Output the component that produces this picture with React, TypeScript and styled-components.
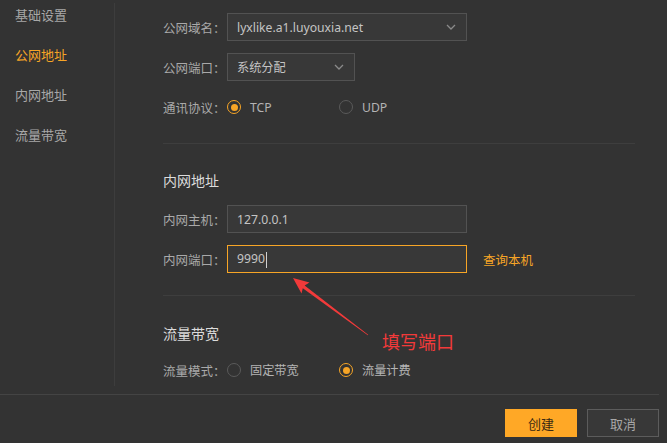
import React from 'react';
import styled, { createGlobalStyle } from 'styled-components';

const Global = createGlobalStyle`
  html, body { margin: 0; padding: 0; background: #333333; }
  body {
    font-family: "Noto Sans", "Noto Sans CJK SC", sans-serif;
    font-size: 13px;
    color: #aaaaaa;
  }
  * { box-sizing: border-box; }
`;

const Page = styled.div`
  position: relative;
  width: 667px;
  height: 443px;
  background: #333333;
  display: flex;
  flex-direction: column;
  overflow: hidden;
`;

const Body = styled.div`
  display: flex;
  height: 394px;
`;

const Sidebar = styled.nav`
  width: 115px;
  flex-shrink: 0;
  margin: 3px 0 8px;
  border-right: 1px solid #3d3d3d;
`;

const NavList = styled.ul`
  list-style: none;
  margin: -8px 0 0;
  padding: 0;
`;

const NavItem = styled.li<{ $active?: boolean }>`
  height: 40px;
  line-height: 40px;
  padding-left: 15px;
  font-size: 13px;
  font-family: "Noto Sans CJK SC", sans-serif;
  color: ${p => (p.$active ? '#f7a526' : '#a8a8a8')};
`;

const Main = styled.main`
  flex: 1;
  padding: 0 32px 0 48px;
`;

const Section = styled.section<{ $pt: number; $pb: number; $divider?: boolean }>`
  padding-top: ${p => p.$pt}px;
  padding-bottom: ${p => p.$pb}px;
  border-bottom: ${p => (p.$divider ? '1px solid #3e3e3e' : 'none')};
  display: flex;
  flex-direction: column;
  gap: 12px;
`;

const SectionTitle = styled.h3<{ $mb: number }>`
  margin: 0 0 ${p => p.$mb - 12}px;
  height: 20px;
  line-height: 20px;
  font-size: 14px;
  font-weight: normal;
  color: #dcdcdc;
  font-family: "Noto Sans CJK SC", sans-serif;
`;

const Row = styled.div`
  display: flex;
  align-items: center;
  height: 28px;
`;

const Label = styled.label`
  width: 64px;
  flex-shrink: 0;
  font-family: "Noto Sans CJK SC", sans-serif;
  font-size: 12.5px;
  color: #a9a9a9;
  white-space: nowrap;
`;

const Field = styled.div<{ $w: number; $focus?: boolean }>`
  width: ${p => p.$w}px;
  height: 28px;
  display: flex;
  align-items: center;
  padding: 0 8px 0 9px;
  background: #383838;
  border: 1px solid ${p => (p.$focus ? '#f7a526' : '#525252')};
  color: #c4c4c4;
  font-size: 12.2px;
`;

const Value = styled.span`
  flex: 1;
  white-space: nowrap;
  font-family: "Noto Sans", "Noto Sans CJK SC", sans-serif;
`;

const Caret = styled.span`
  display: inline-block;
  width: 1px;
  height: 16px;
  background: #d0d0d0;
  margin-left: 1px;
  vertical-align: middle;
`;

const Chevron = () => (
  <svg width="10" height="6" viewBox="0 0 10 6" fill="none" style={{ marginRight: 2 }}>
    <path d="M1 1 L5 5 L9 1" stroke="#8a8a8a" strokeWidth="1.3" />
  </svg>
);

const RadioOption = styled.div`
  width: 112px;
  display: flex;
  align-items: center;
  gap: 9px;
  font-size: 12.2px;
  color: #b4b4b4;
  font-family: "Noto Sans", "Noto Sans CJK SC", sans-serif;
`;

const RadioCircle = styled.span<{ $on?: boolean }>`
  width: 14px;
  height: 14px;
  border-radius: 50%;
  border: ${p => (p.$on ? '1.5px solid #f7a526' : '1px solid #5a5a5a')};
  display: flex;
  align-items: center;
  justify-content: center;
  flex-shrink: 0;
  &::after {
    content: '';
    display: ${p => (p.$on ? 'block' : 'none')};
    width: 7px;
    height: 7px;
    border-radius: 50%;
    background: #f7a526;
  }
`;

const LinkText = styled.span`
  margin-left: 16px;
  color: #f7a526;
  font-family: "Noto Sans CJK SC", sans-serif;
  font-size: 12.5px;
`;

const Footer = styled.footer`
  height: 49px;
  margin-right: 8px;
  border-top: 1px solid #444444;
  display: flex;
  justify-content: flex-end;
  align-items: flex-start;
  padding-top: 14px;
  gap: 10px;
`;

const Button = styled.button<{ $primary?: boolean }>`
  width: 72px;
  height: 28px;
  font-family: "Noto Sans CJK SC", sans-serif;
  font-size: 13px;
  padding: 0;
  cursor: pointer;
  background: ${p => (p.$primary ? '#ffa826' : '#383838')};
  color: ${p => (p.$primary ? '#3b2a12' : '#a8a8a8')};
  border: ${p => (p.$primary ? 'none' : '1px solid #5c5c5c')};
`;

const Annotation = styled.div`
  position: absolute;
  inset: 0;
  pointer-events: none;
`;

const AnnotationText = styled.span`
  position: absolute;
  left: 382px;
  top: 330px;
  font-family: "Noto Sans CJK SC", sans-serif;
  font-size: 18px;
  line-height: 22px;
  color: #f23a3a;
`;

function Radio({ on, children }: { on?: boolean; children: React.ReactNode }) {
  return (
    <RadioOption>
      <RadioCircle $on={on} />
      <span>{children}</span>
    </RadioOption>
  );
}

export default function App() {
  return (
    <>
      <Global />
      <Page>
        <Body>
          <Sidebar>
            <NavList>
              <NavItem>基础设置</NavItem>
              <NavItem $active>公网地址</NavItem>
              <NavItem>内网地址</NavItem>
              <NavItem>流量带宽</NavItem>
            </NavList>
          </Sidebar>
          <Main>
            <Section $pt={13} $pb={22} $divider>
              <Row>
                <Label>公网域名：</Label>
                <Field $w={240}>
                  <Value>lyxlike.a1.luyouxia.net</Value>
                  <Chevron />
                </Field>
              </Row>
              <Row>
                <Label>公网端口：</Label>
                <Field $w={128}>
                  <Value>系统分配</Value>
                  <Chevron />
                </Field>
              </Row>
              <Row>
                <Label>通讯协议：</Label>
                <Radio on>TCP</Radio>
                <Radio>UDP</Radio>
              </Row>
            </Section>
            <Section $pt={26} $pb={22} $divider>
              <SectionTitle $mb={15}>内网地址</SectionTitle>
              <Row>
                <Label>内网主机：</Label>
                <Field $w={240}>
                  <Value>127.0.0.1</Value>
                </Field>
              </Row>
              <Row>
                <Label>内网端口：</Label>
                <Field $w={240} $focus>
                  <Value>
                    9990
                    <Caret />
                  </Value>
                </Field>
                <LinkText>查询本机</LinkText>
              </Row>
            </Section>
            <Section $pt={27} $pb={0}>
              <SectionTitle $mb={13}>流量带宽</SectionTitle>
              <Row>
                <Label>流量模式：</Label>
                <Radio>固定带宽</Radio>
                <Radio on>流量计费</Radio>
              </Row>
            </Section>
          </Main>
        </Body>
        <Footer>
          <Button $primary>创建</Button>
          <Button>取消</Button>
        </Footer>
        <Annotation>
          <svg width="667" height="443" viewBox="0 0 667 443" style={{ position: 'absolute', left: 0, top: 0 }}>
            <polygon
              points="293,278 309.5,282.5 304.6,285.6 368.2,334.8 367.8,335.2 302.8,288.2 301.5,293.5"
              fill="#f23a3a"
            />
          </svg>
          <AnnotationText>填写端口</AnnotationText>
        </Annotation>
      </Page>
    </>
  );
}
